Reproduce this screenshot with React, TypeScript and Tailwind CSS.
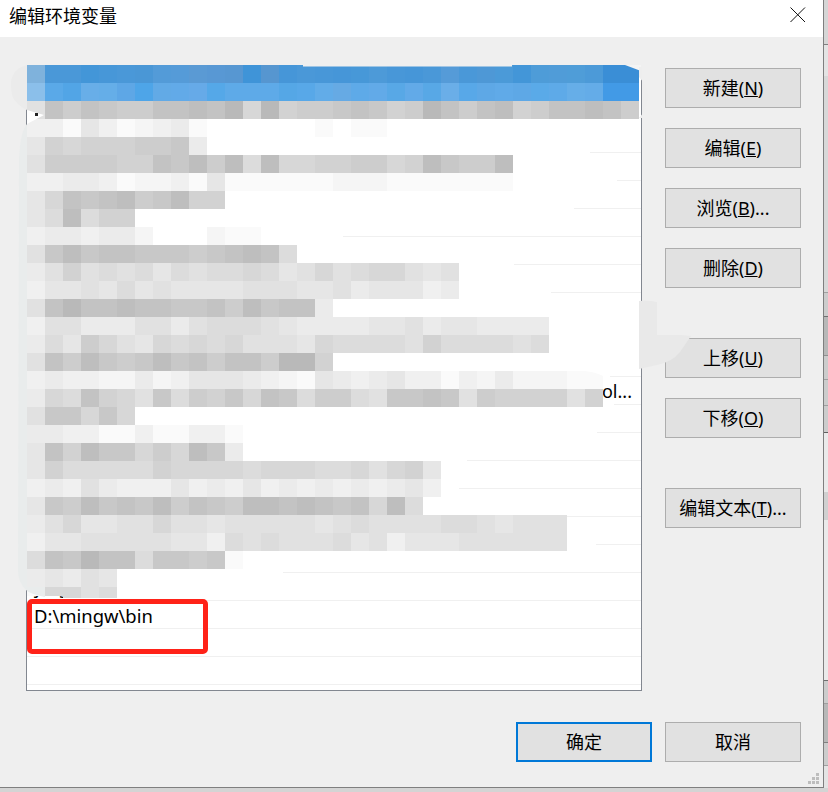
import React from 'react';

const BLUE_TOP = ['7fb2dc','4a98d8','4a98d8','4396d8','4797d8','4a98d8','4a97d6','539bd8','559bd8','5a9ad4','5898d4','5797d2','3f94d8','5696d0','4696d8','4a98d8','4897d8','4696d8','4798d8','4d9ad8','4897d8','4696d8','4a98d8','559bd8','4a98d8','4e98d6','4b9ad8','4396d8','4e9cd8','509cd8','4f9dd8','4c9ad8','3a8ed6','3a8ed6'];
const BLUE_BOTTOM = ['8bbfea','5aa9e8','52a5e6','68aee8','65aee8','5ea7e6','4ea5e8','62aae6','62aae8','66aae8','55a8e8','5eaae8','5eaae8','5eaae8','55a7e6','58a8e8','62ace8','66aae4','5eaae8','62aae8','58a8e6','62aae8','58a8e6','6aaee8','58a8e8','5ea8e6','60aae8','5ea8e6','5aaae8','5eaae8','66aee8','64ace8','429ae6','429ae6'];

// one hex digit per mosaic cell, 0 = #b4 ... f = #ff
const GRAY_ROWS = [
  '9353455332317165543465135326533235',
  'cceacedcbeffffffefeef',
  'a67666554b',
  '955556634252827766557624552',
  'ccbbceddceaeeeeeedddeeeeeeef',
  'a7343254266',
  'a82866',
  'cbbcbbdfffdee',
  '942433444543238',
  'b969898a898878a9798779a9',
  'caa9a8a9aaaa999aa9baaacb',
  '9313323344352433b',
  'c99bbb99b98889abbbbaa9baabbbb',
  'b8a579a78787999a7888896888898',
  '93524542435335116',
  'cbccddbdcaaabcdeabcbaccecdbdddee',
  'b7836794856473485589443495666696',
  '944747',
  'bbcceeceecce',
  'a3624475724b',
  'a688888677778777887976a',
  'cbc9bcccacbcacbcbcbcbac',
  'a452434253452232343728',
  'b97aa99799a99999a989999889a999',
  'caa99999aac8989998a9caaa999999',
  '83413384454e',
  'bab9a',
  'e7798',
];

// x where each row's separator line comes out from under the blur, null = hidden
const LINE_STARTS: (number | null)[] = [null, null, 590, 617, 574, 343, 514, 551, null, null, 610, 614, 597, 467, 459, 567, 596, 283, 118, 27, 27, 27];

const STRIP: [number, string][] = [
  [44, '#d6d6d6'], [1, '#808080'], [31, '#e4e4e4'], [216, '#d8d8d8'], [1, '#a0a0a0'], [23, '#cccccc'], [1, '#707070'], [38, '#b8b8b8'],
  [1, '#909090'], [23, '#cccccc'], [1, '#a0a0a0'], [25, '#cccccc'], [1, '#a0a0a0'], [26, '#cccccc'], [1, '#606060'], [59, '#eaeaea'],
  [28, '#d0d0d0'], [160, '#eaeaea'], [1, '#707070'], [22, '#cccccc'], [1, '#a0a0a0'], [38, '#b8b8b8'], [1, '#808080'], [22, '#cccccc'],
  [1, '#a0a0a0'], [22, '#e4e4e4'],
];

const toGray = (d: string) => {
  const g = 180 + parseInt(d, 16) * 5;
  return `rgb(${g},${g},${g})`;
};

const DialogButton: React.FC<{ label: string; hotkey?: string; tail?: string; primary?: boolean }> = ({ label, hotkey, tail, primary }) => (
  <button
    className={`w-[136px] h-[40px] flex items-center justify-center bg-[#e1e1e1] text-[18px] text-black ${
      primary ? 'border-2 border-[#0078d7]' : 'border border-[#adadad]'
    }`}
  >
    {label}
    {hotkey && (
      <>
        (<span className="underline">{hotkey}</span>){tail}
      </>
    )}
  </button>
);

const BlurOverlay: React.FC = () => (
  <svg className="absolute inset-0 pointer-events-none" width="828" height="792" viewBox="0 0 828 792" shapeRendering="crispEdges">
    <defs>
      <clipPath id="blurClip">
        <path d="M0 0H640V371H585Q606 373 611 385L614 407H640V792H0Z" />
      </clipPath>
    </defs>
    <g clipPath="url(#blurClip)">
      {BLUE_TOP.map((c, i) => (
        <rect key={i} x={27 + i * 18} y={65} width={18} height={18} fill={`#${c}`} />
      ))}
      {BLUE_BOTTOM.map((c, i) => (
        <rect key={i} x={27 + i * 18} y={83} width={18} height={18} fill={`#${c}`} />
      ))}
      {GRAY_ROWS.map((row, r) =>
        row.split('').map((d, i) => (
          <rect
            key={`${r}-${i}`}
            x={27 + i * 18}
            y={101 + r * 18}
            width={18}
            height={r === 27 ? (i < 2 ? 9 : 11) : 18}
            fill={toGray(d)}
          />
        )),
      )}
    </g>
    <g shapeRendering="auto">
      <rect x="303" y="65" width="209" height="1.5" fill="#efefef" />
      <path d="M625 65H641V71Z" fill="#f4f4f4" />
      <path d="M27 65Q13 68 11 82Q10 98 18 104Q22 108 27 110Z" fill="#ebebeb" />
      <path d="M639 67H642V118H639Q645 112 648 100Q650 88 639 77Z" fill="#eeeeee" />
      <path d="M27 110L44 115L27 124Z" fill="#ffffff" />
      <rect x="35" y="113" width="3" height="3" fill="#222222" />
      <path d="M27 124Q20 132 19 160L18 570Q18 582 26 590Q30 594 45 597V587H27Z" fill="#e9ecec" />
      <path d="M639 301Q648 300 657 302V335H682L691 336L680 352Q672 362 657 365L639 369Z" fill="#e9e9e9" />
    </g>
  </svg>
);

const App: React.FC = () => {
  return (
    <div className="relative w-[828px] h-[792px] overflow-hidden bg-[#d4d4d4] [font-family:'Noto_Sans','Noto_Sans_CJK_SC',sans-serif]">
      <div className="flex">
        <div className="w-[824px] h-[788px] flex flex-col border-r border-b border-[#7f7f7f] bg-[#efefef]">
          {/* Title bar */}
          <div className="h-[37px] shrink-0 bg-white flex items-center justify-between pl-[9px] pr-[17px]">
            <span className="text-[18px] leading-none text-black -mt-[6px]">编辑环境变量</span>
            <svg width="16" height="16" viewBox="0 0 16 16" className="-mt-[7px]">
              <path d="M0.5 0.5L15 15M15 0.5L0.5 15" stroke="#111" strokeWidth="1" fill="none" />
            </svg>
          </div>

          {/* Body */}
          <div className="relative flex-1 pt-[30px] pl-[26px] pr-[22px]">
            <div className="flex">
              <div className="w-[616px] h-[624px] pt-px border border-[#828790] bg-white text-[18px] text-black">
                {LINE_STARTS.map((start, i) => (
                  <div key={i} className="h-[28px] flex flex-col">
                    <div className="flex-1 flex items-center overflow-visible leading-none whitespace-pre">
                      {i === 11 && <span className="ml-auto pr-[9px]">ol...</span>}
                      {i === 18 && <span className="pl-[8px]">j    g</span>}
                      {i === 19 && <span className="pl-[7px] pt-[3px] text-[18.45px]">D:\mingw\bin</span>}
                    </div>
                    <div className={`h-px ${start === null ? 'bg-white' : 'bg-[#f0f0f0]'}`} style={{ marginLeft: (start ?? 27) - 27 }} />
                  </div>
                ))}
              </div>

              <div className="ml-[23px] mt-px flex flex-col">
                <div className="flex flex-col gap-[20px]">
                  <DialogButton label="新建" hotkey="N" />
                  <DialogButton label="编辑" hotkey="E" />
                  <DialogButton label="浏览" hotkey="B" tail="..." />
                  <DialogButton label="删除" hotkey="D" />
                </div>
                <div className="mt-[50px] flex flex-col gap-[20px]">
                  <DialogButton label="上移" hotkey="U" />
                  <DialogButton label="下移" hotkey="O" />
                </div>
                <div className="mt-[50px]">
                  <DialogButton label="编辑文本" hotkey="T" tail="..." />
                </div>
              </div>
            </div>

            <div className="mt-[31px] flex justify-end gap-[13px]">
              <DialogButton label="确定" primary />
              <DialogButton label="取消" />
            </div>

            {/* Resize grip */}
            <svg className="absolute right-[3px] bottom-[2px]" width="12" height="12" viewBox="0 0 12 12">
              <path d="M8 0h3v3H8zM4 4h3v3H4zM8 4h3v3H8zM0 8h3v3H0zM4 8h3v3H4zM8 8h3v3H8z" fill="#bdbdbd" />
            </svg>
          </div>
        </div>

        {/* Whatever lies behind the dialog */}
        <div className="w-[4px] flex flex-col">
          {STRIP.map(([h, c], i) => (
            <div key={i} style={{ height: h, backgroundColor: c }} />
          ))}
        </div>
      </div>

      <BlurOverlay />

      {/* Annotation box */}
      <div className="absolute left-[27px] top-[599px] w-[181px] h-[55px] border-[5px] border-[#ff2218] rounded-[5px] pointer-events-none" />
    </div>
  );
};

export default App;
